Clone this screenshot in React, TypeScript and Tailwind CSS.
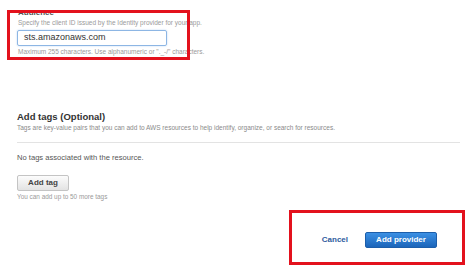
export default function App() {
  return (
    <div className="relative w-[474px] h-[273px] bg-white overflow-hidden font-['Liberation_Sans',Arial,sans-serif]">
      <div className="pl-[17px] pr-[14px] pt-[8px]">
        {/* Audience field */}
        <div className="pl-px text-[8px] leading-[10px] font-bold text-[#555]">Audience</div>
        <p className="pl-px text-[6.5px] leading-[10px] text-[#9a9a9a] whitespace-nowrap">
          Specify the client ID issued by the Identity provider for your app.
        </p>
        <div className="mt-[2px] w-[150px] h-[16px] flex items-center px-[6px] border border-[#8db6e4] rounded-[2px] shadow-[0_0_2px_#bcd6f2] text-[9px] text-[#333]">
          sts.amazonaws.com
        </div>
        <p className="mt-px pl-px text-[6.5px] leading-[10px] text-[#9a9a9a] whitespace-nowrap">
          Maximum 255 characters. Use alphanumeric or "._-/" characters.
        </p>

        {/* Tags */}
        <h2 className="mt-[54px] text-[9.5px] leading-[12px] font-bold text-[#333]">Add tags (Optional)</h2>
        <p className="text-[6.5px] leading-[10px] text-[#8a8a8a] whitespace-nowrap">
          Tags are key-value pairs that you can add to AWS resources to help identify, organize, or search for resources.
        </p>
        <div className="mt-[9px] h-px bg-[#e3e3e3]" />
        <p className="mt-[10px] text-[7.6px] leading-[10px] text-[#555]">No tags associated with the resource.</p>
        <button className="mt-[12px] w-[52px] h-[16px] flex items-center justify-center border border-[#c4c4c4] rounded-[2px] bg-gradient-to-b from-[#fcfcfc] to-[#e3e3e3] text-[8px] font-bold text-[#444]">
          Add tag
        </button>
        <p className="mt-px text-[6.4px] leading-[10px] text-[#9a9a9a]">You can add up to 50 more tags</p>
      </div>

      {/* Footer actions */}
      <div className="mt-[30px] pr-[37px] flex justify-end items-center gap-[17px]">
        <button className="text-[8px] font-bold text-[#2e5c9e]">Cancel</button>
        <button className="w-[72px] h-[16px] flex items-center justify-center rounded-[2px] border border-[#1c5eaa] bg-gradient-to-b from-[#3b90e4] to-[#1b65ba] text-[8px] font-bold text-white">
          Add provider
        </button>
      </div>

      {/* Annotation boxes */}
      <div className="absolute left-[7px] top-[10px] w-[183px] h-[50px] border-[3px] border-[#e3111d]" />
      <div className="absolute left-[289px] top-[210px] w-[176px] h-[55px] border-[3px] border-[#e3111d]" />
    </div>
  );
}
